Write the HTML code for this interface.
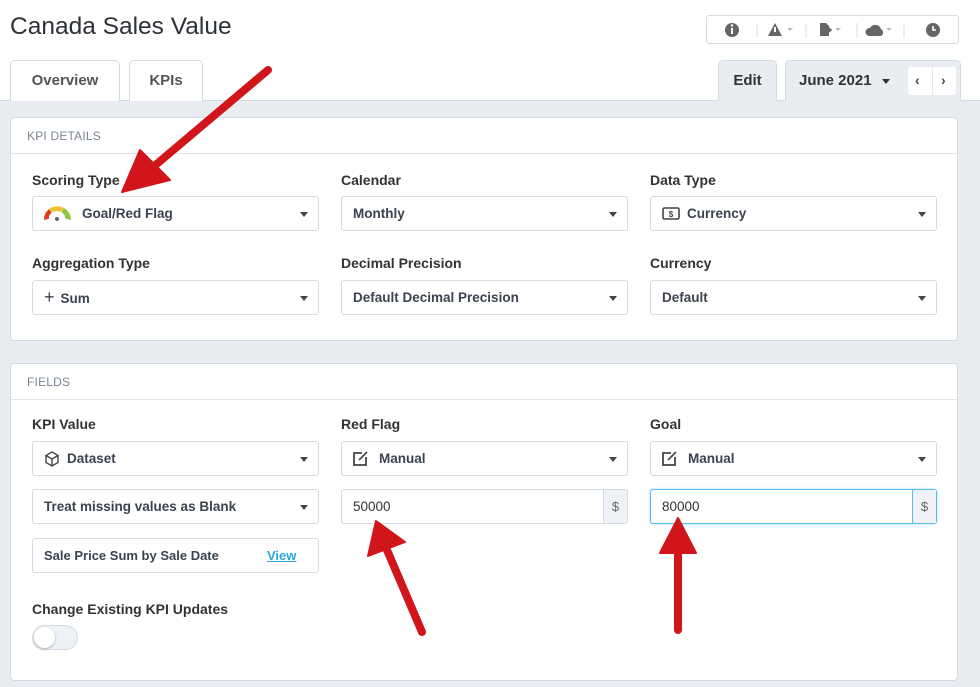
<!DOCTYPE html>
<html><head><style>
*{box-sizing:border-box;margin:0;padding:0}
body{width:980px;height:687px;overflow:hidden;background:#fff;font-family:"Liberation Sans",sans-serif;color:#333;position:relative}
.abs{position:absolute}
.bg{position:absolute;left:0;top:100px;width:980px;height:587px;background:#e9edf2;border-top:1px solid #d5dbe3}
.tab{position:absolute;top:60px;height:41px;border:1px solid #d5dbe3;border-bottom:none;border-radius:5px 5px 0 0;background:#fff;font-size:15px;font-weight:bold;color:#555;text-align:center;line-height:40px}
.panel{position:absolute;left:10px;width:948px;background:#fff;border:1px solid #d5dbe3;border-radius:4px}
.ph{height:36px;border-bottom:1px solid #e1e5ea;font-size:12px;color:#7a8593;padding-left:16px;line-height:36px;letter-spacing:.2px}
.lbl{position:absolute;font-size:14px;font-weight:bold;color:#333}
.sel{position:absolute;width:287px;height:35px;border:1px solid #d5dbe3;border-radius:3px;background:#fff;font-size:13.5px;font-weight:bold;color:#3b4350;line-height:33px;padding-left:11px}
.sel:after{content:"";position:absolute;right:10px;top:15px;border-left:4.5px solid transparent;border-right:4.5px solid transparent;border-top:5px solid #444}
.inp{position:absolute;width:287px;height:35px;border:1px solid #d5dbe3;border-radius:3px;background:#fff;font-size:13.5px;color:#333;line-height:33px;padding-left:11px}
.inp span{position:absolute;right:0;top:0;width:24px;height:33px;background:#eef1f5;border-left:1px solid #d5dbe3;text-align:center;color:#666;font-size:13px}
</style></head><body>
<div class="abs" style="left:10px;top:13px;font-size:24.5px;color:#2d3138">Canada Sales Value</div>
<div class="abs" style="left:706px;top:15px;width:253px;height:29px;border:1px solid #d5dbe3;border-radius:3px;font-size:13px;color:#666">
<svg width="253" height="29" style="position:absolute;left:0;top:0">
<circle cx="25" cy="14" r="7" fill="#666"/><rect x="24" y="12" width="2" height="6" fill="#fff"/><circle cx="25" cy="9.5" r="1.2" fill="#fff"/>
<line x1="50" y1="7" x2="50" y2="22" stroke="#ddd"/>
<path d="M68 7 L75 20 L61 20Z" fill="#666"/><rect x="67" y="11" width="2" height="5" fill="#fff"/>
<path d="M80 12h6l-3 3z" fill="#bbb"/>
<line x1="99" y1="7" x2="99" y2="22" stroke="#ddd"/>
<path d="M113 7h6l3 3v10h-9z" fill="#666"/><path d="M118 14h6m-2-2l2 2-2 2" stroke="#666" stroke-width="1.5" fill="none"/>
<path d="M128 12h6l-3 3z" fill="#bbb"/>
<line x1="150" y1="7" x2="150" y2="22" stroke="#ddd"/>
<path d="M162 20a4 4 0 0 1 1-8a6 6 0 0 1 11 1a4 4 0 0 1 0 7z" fill="#666"/>
<path d="M179 12h6l-3 3z" fill="#bbb"/>
<line x1="197" y1="7" x2="197" y2="22" stroke="#ddd"/>
<circle cx="226" cy="14" r="7" fill="#666"/><path d="M226 10v4h3" stroke="#fff" stroke-width="1.6" fill="none"/>
</svg></div>
<div class="bg"></div>
<div class="tab" style="left:10px;width:110px">Overview</div>
<div class="tab" style="left:129px;width:74px">KPIs</div>
<div class="tab" style="left:718px;width:59px;background:#e9edf2;color:#333">Edit</div>
<div class="tab" style="left:785px;width:176px;background:#e9edf2;color:#333;text-align:left;padding-left:13px">June 2021 <span style="display:inline-block;margin-left:6px;border-left:4.5px solid transparent;border-right:4.5px solid transparent;border-top:5px solid #333;vertical-align:middle"></span>
<div style="position:absolute;left:122px;top:6px;width:48px;height:28px;background:#fff;border-radius:3px;line-height:26px;font-size:14px;color:#444"><span style="position:absolute;left:7px">‹</span><span style="position:absolute;left:24px;top:0;width:1px;height:28px;background:#e5e8ec"></span><span style="position:absolute;left:33px">›</span></div></div>

<div class="panel" style="top:117px;height:224px"><div class="ph">KPI DETAILS</div></div>
<div class="lbl" style="left:32px;top:172px">Scoring Type</div>
<div class="lbl" style="left:341px;top:172px">Calendar</div>
<div class="lbl" style="left:650px;top:172px">Data Type</div>
<div class="sel" style="left:32px;top:196px;padding-left:49px"><svg width="30" height="18" style="position:absolute;left:10px;top:8px"><path d="M1 15A14 14 0 0 1 6 4L12 12Z" fill="#e63a1f"/><path d="M6 4A14 14 0 0 1 21 3L15 12Z" fill="#f2c232"/><path d="M21 3A14 14 0 0 1 28 15L16 12Z" fill="#8dc63f"/><path d="M6 11A9 9 0 0 1 22 11V16H6Z" fill="#fff"/><circle cx="14" cy="14" r="2" fill="#666"/></svg>Goal/Red Flag</div>
<div class="sel" style="left:341px;top:196px">Monthly</div>
<div class="sel" style="left:650px;top:196px;padding-left:36px"><svg width="18" height="14" style="position:absolute;left:11px;top:10px"><rect x="1" y="1" width="16" height="11" rx="1.5" fill="none" stroke="#444" stroke-width="1.6"/><text x="9" y="10" font-size="8" text-anchor="middle" fill="#444" font-family="Liberation Sans">$</text></svg>Currency</div>
<div class="lbl" style="left:32px;top:255px">Aggregation Type</div>
<div class="lbl" style="left:341px;top:255px">Decimal Precision</div>
<div class="lbl" style="left:650px;top:255px">Currency</div>
<div class="sel" style="left:32px;top:280px"><span style="font-weight:normal;font-size:18px;margin-right:6px">+</span>Sum</div>
<div class="sel" style="left:341px;top:280px">Default Decimal Precision</div>
<div class="sel" style="left:650px;top:280px">Default</div>

<div class="panel" style="top:363px;height:318px"><div class="ph">FIELDS</div></div>
<div class="lbl" style="left:32px;top:416px">KPI Value</div>
<div class="lbl" style="left:341px;top:416px">Red Flag</div>
<div class="lbl" style="left:650px;top:416px">Goal</div>
<div class="sel" style="left:32px;top:441px;padding-left:34px"><svg width="16" height="16" style="position:absolute;left:11px;top:9px"><path d="M8 1L14 4.5V11.5L8 15L2 11.5V4.5ZM2 4.5L8 8L14 4.5M8 8V15" fill="none" stroke="#444" stroke-width="1.4"/></svg>Dataset</div>
<div class="sel" style="left:341px;top:441px;padding-left:37px"><svg width="18" height="18" style="position:absolute;left:10px;top:7px"><path d="M10 4H2V16H14V8" fill="none" stroke="#444" stroke-width="1.8"/><path d="M7 11L15 3" stroke="#444" stroke-width="1.6"/></svg>Manual</div>
<div class="sel" style="left:650px;top:441px;padding-left:37px"><svg width="18" height="18" style="position:absolute;left:10px;top:7px"><path d="M10 4H2V16H14V8" fill="none" stroke="#444" stroke-width="1.8"/><path d="M7 11L15 3" stroke="#444" stroke-width="1.6"/></svg>Manual</div>
<div class="sel" style="left:32px;top:489px">Treat missing values as Blank</div>
<div class="inp" style="left:341px;top:489px">50000<span>$</span></div>
<div class="inp" style="left:650px;top:489px;border-color:#5bbcf0;box-shadow:0 0 2px #9dd7f7">80000<span style="background:#eef1f5;border-left-color:#5bbcf0">$</span></div>
<div class="inp" style="left:32px;top:538px;font-weight:bold;font-size:13px;color:#3b4350">Sale Price Sum by Sale Date<b style="position:absolute;left:234px;color:#2aa8e0;text-decoration:underline">View</b></div>
<div class="lbl" style="left:32px;top:601px">Change Existing KPI Updates</div>
<div class="abs" style="left:32px;top:625px;width:46px;height:25px;border:1px solid #d5dbe3;border-radius:13px;background:#eef1f5"><div style="position:absolute;left:1px;top:1px;width:21px;height:21px;border-radius:50%;background:#fff;box-shadow:0 1px 2px #aaa"></div></div>

<svg width="980" height="687" style="position:absolute;left:0;top:0">
<g fill="#d0161b" stroke="#d0161b" stroke-linecap="round">
<line x1="268" y1="70" x2="152" y2="168" stroke-width="8"/>
<path d="M122 192L140 150L170 180Z" stroke-width="2" stroke-linejoin="round"/>
<line x1="422" y1="632" x2="387" y2="550" stroke-width="8"/>
<path d="M376 521L368 556L405 542Z" stroke-width="2" stroke-linejoin="round"/>
<line x1="678" y1="630" x2="678" y2="550" stroke-width="8"/>
<path d="M678 518L660 553L696 553Z" stroke-width="2" stroke-linejoin="round"/>
</g></svg>
</body></html>
